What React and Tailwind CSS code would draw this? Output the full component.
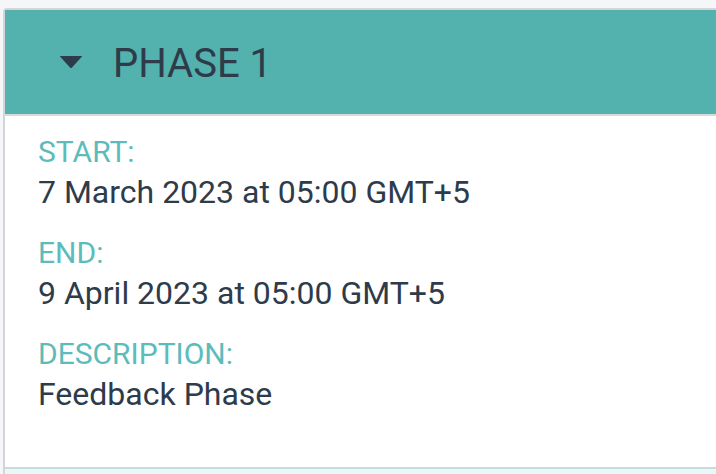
export default function App() {
  const fields = [
    { label: 'START:', value: '7 March 2023 at 05:00 GMT+5' },
    { label: 'END:', value: '9 April 2023 at 05:00 GMT+5' },
    { label: 'DESCRIPTION:', value: 'Feedback Phase' },
  ]

  return (
    <div
      className="h-[474px] w-[716px] overflow-hidden bg-[#f5f6f8] pl-[3px] pt-2"
      style={{ fontFamily: 'Roboto, "Liberation Sans", sans-serif' }}
    >
      <div className="w-[760px] rounded-tl-[4px] border-l-2 border-t-2 border-[#d4d5d9] bg-white">
        <div className="flex h-[104px] items-center bg-[#53b2ad] pl-[54px]">
          <svg width="24" height="14" viewBox="0 0 24 14" className="mr-[30px]">
            <path d="M1.5 1 H22.5 Q23.5 1 22.8 1.8 L13 12.6 Q12 13.6 11 12.6 L1.2 1.8 Q0.5 1 1.5 1 Z" fill="#2e3b4a" />
          </svg>
          <span className="pt-[3px] text-[40px] leading-none text-[#2e3b4a]">PHASE 1</span>
        </div>
        <div className="flex h-[353px] flex-col gap-[21px] border-t-2 border-[#d8d9db] pl-[33px] pt-[18px]">
          {fields.map((f) => (
            <div key={f.label} className="flex flex-col">
              <div className="text-[30px] leading-[36px] text-[#5bbcbb]">{f.label}</div>
              <div className="text-[32px] leading-[44px] text-[#2e3b4a]">{f.value}</div>
            </div>
          ))}
        </div>
        <div className="h-[10px] border-t-2 border-[#c9dcdc] bg-[#e7f8f8]" />
      </div>
    </div>
  )
}
